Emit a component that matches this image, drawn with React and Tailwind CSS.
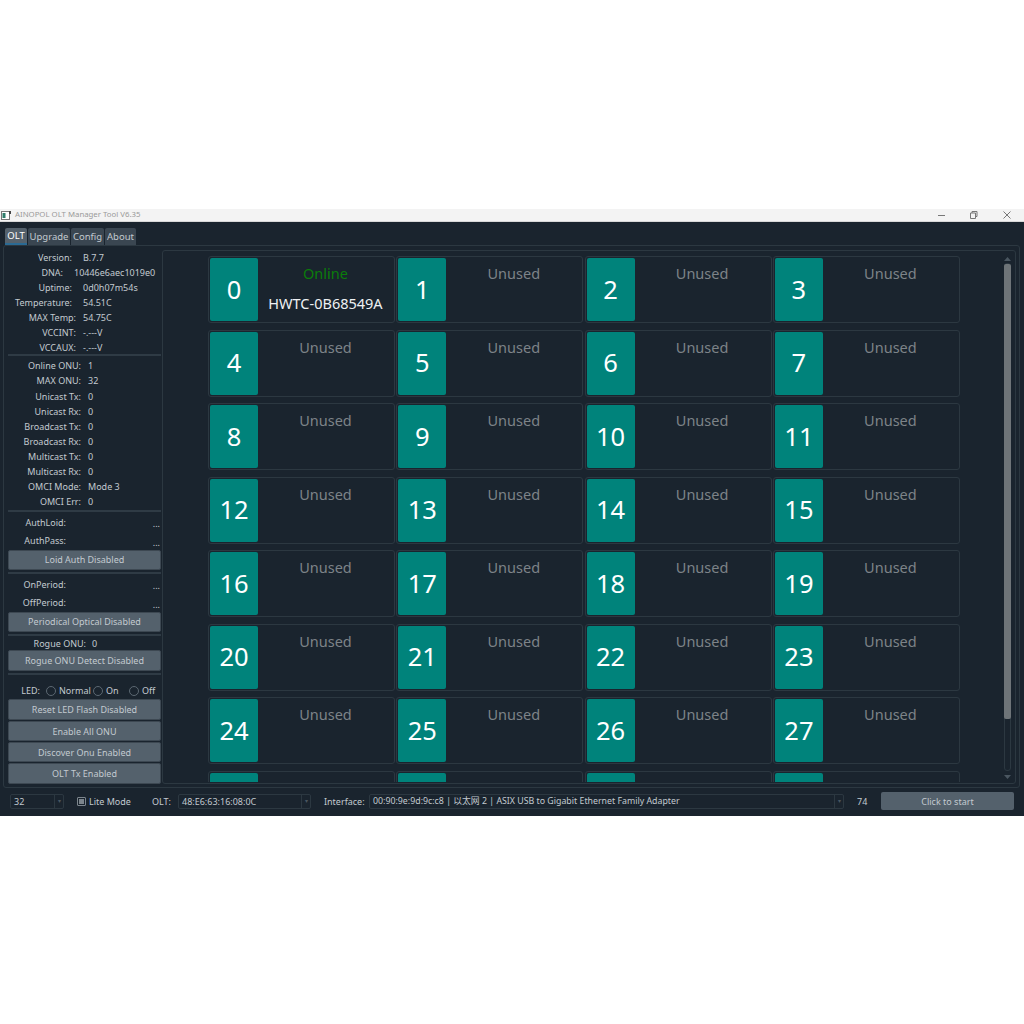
const sans = "font-['Noto_Sans','Noto_Sans_CJK_SC',sans-serif]";

function InfoRow({ label, value, lw, gap, h }) {
  return (
    <div className={`flex ${h} items-center whitespace-nowrap text-[9px] leading-none text-[#c3cad0]`}>
      <span className={`${lw} shrink-0 text-right`}>{label}</span>
      <span className={gap}>{value}</span>
    </div>
  );
}

function Sep({ className = "" }) {
  return <div className={`h-[2px] w-[153px] bg-[#2f3b45] ${className}`} />;
}

function Btn({ children, className = "" }) {
  return (
    <div className={`flex w-[153px] items-center justify-center rounded-[2px] border border-[#3d4852] bg-[#54616c] text-[9px] leading-none text-[#c3cad0] ${className}`}>
      {children}
    </div>
  );
}

function Field({ label }) {
  return (
    <div className="flex h-[19px] w-[153px] items-center justify-between pt-[1px] text-[9px] leading-none text-[#c3cad0]">
      <span className="w-[58px] text-right">{label}</span>
      <span className="pr-[1px] pt-[3px] leading-none">...</span>
    </div>
  );
}

function Radio({ label, w }) {
  return (
    <span className={`flex items-center ${w}`}>
      <span className="mr-[3px] h-[10px] w-[10px] shrink-0 rounded-full border border-[#5c6872]" />
      {label}
    </span>
  );
}

function Card({ n, online }) {
  return (
    <div className="flex h-[67px] w-[187px] shrink-0 rounded-[3px] border border-[#2c3841] p-[1px]">
      <div className="flex h-[63px] w-[48px] shrink-0 items-center justify-center rounded-[2px] bg-[#00837b] text-[25.5px] leading-none text-white">
        {n}
      </div>
      <div className="flex flex-1 flex-col items-center pt-[5px]">
        <div className={`text-[14.5px] leading-[20px] ${online ? "text-[#0a7d0a]" : "text-[#7d8388]"}`}>
          {online ? "Online" : "Unused"}
        </div>
        {online && <div className="mt-[10px] whitespace-nowrap text-[14.5px] leading-[20px] text-[#eef1f3]">HWTC-0B68549A</div>}
      </div>
    </div>
  );
}

const first = [
  ["Version:", "B.7.7", "w-[64px]", "ml-[11px]"],
  ["DNA:", "10446e6aec1019e0", "w-[55px]", "ml-[11px]"],
  ["Uptime:", "0d0h07m54s", "w-[64px]", "ml-[11px]"],
  ["Temperature:", "54.51C", "w-[64px]", "ml-[11px]"],
  ["MAX Temp:", "54.75C", "w-[68px]", "ml-[7px]"],
  ["VCCINT:", "-.---V", "w-[68px]", "ml-[7px]"],
  ["VCCAUX:", "-.---V", "w-[68px]", "ml-[7px]"],
];
const second = [
  ["Online ONU:", "1"],
  ["MAX ONU:", "32"],
  ["Unicast Tx:", "0"],
  ["Unicast Rx:", "0"],
  ["Broadcast Tx:", "0"],
  ["Broadcast Rx:", "0"],
  ["Multicast Tx:", "0"],
  ["Multicast Rx:", "0"],
  ["OMCI Mode:", "Mode 3"],
  ["OMCI Err:", "0"],
];

export default function App() {
  const rows = [];
  for (let r = 0; r < 8; r++) rows.push([0, 1, 2, 3].map((c) => r * 4 + c));
  return (
    <div className={`flex min-h-[1024px] flex-col bg-white pt-[209px] ${sans}`}>
      <div className="flex h-[13px] items-center border-b border-[#d8d8d8] bg-[#f3f3f3] pl-[1px] text-[7.8px] leading-none text-[#9a9a9a]">
        <svg width="10" height="9" viewBox="0 0 10 9" className="mr-[4px]">
          <rect x="0.5" y="0.5" width="8" height="8" fill="#fff" stroke="#777" />
          <rect x="1.5" y="2" width="3" height="5" fill="#2f7d6b" />
          <rect x="8" y="0" width="2" height="3" fill="#444" />
        </svg>
        AINOPOL OLT Manager Tool V6.35
        <div className="ml-auto flex items-center">
          <svg width="8" height="8" viewBox="0 0 8 8" className="mr-[24px]"><path d="M0 4.5h7" stroke="#777" /></svg>
          <svg width="8" height="8" viewBox="0 0 8 8" className="mr-[25px]"><path d="M0.5 2h5v5.5h-5zM2 2V0.5h5v5h-1.5" stroke="#777" fill="none" /></svg>
          <svg width="8" height="8" viewBox="0 0 8 8" className="mr-[13px]"><path d="M0.5 0.5l7 7M7.5 0.5l-7 7" stroke="#777" /></svg>
        </div>
      </div>

      <div className="flex h-[594px] flex-col bg-[#1a242e]">
        <div className="flex h-[23px] items-end gap-[1px] pl-[5px] text-[9.5px] leading-none text-[#c3cad0]">
          <div className="flex h-[17px] w-[22px] items-center justify-center rounded-t-[2px] border-b-2 border-[#2a6a94] bg-[#54616c] text-white">OLT</div>
          <div className="flex h-[17px] w-[42px] items-center justify-center rounded-t-[2px] bg-[#3a4651]">Upgrade</div>
          <div className="flex h-[17px] w-[33px] items-center justify-center rounded-t-[2px] bg-[#3a4651]">Config</div>
          <div className="flex h-[17px] w-[31px] items-center justify-center rounded-t-[2px] bg-[#3a4651]">About</div>
        </div>

        <div className="ml-[3px] mr-[4px] flex h-[543px] rounded-[3px] border border-[#2c3841] pb-[3px] pl-[4px] pr-[3px] pt-[4px]">
          <div className="flex w-[154px] shrink-0 flex-col">
            {first.map(([l, v, w, g]) => <InfoRow key={l} label={l} value={v} lw={w} gap={g} h="h-[15.33px]" />)}
            <Sep className="mt-[-1px]" />
            <div className="h-[2px]" />
            {second.map(([l, v]) => <InfoRow key={l} label={l} value={v} lw="w-[73px]" gap="ml-[7px]" h="h-[15.4px]" />)}
            <Sep className="mt-[1px]" />
            <Field label="AuthLoid:" />
            <Field label="AuthPass:" />
            <Btn className="h-[21px]">Loid Auth Disabled</Btn>
            <Sep className="mt-[2px]" />
            <Field label="OnPeriod:" />
            <Field label="OffPeriod:" />
            <Btn className="h-[21px]">Periodical Optical Disabled</Btn>
            <Sep className="mt-[2px]" />
            <div className="flex h-[14px] items-center whitespace-nowrap text-[9px] leading-none text-[#c3cad0]">
              <span className="w-[78px] text-right">Rogue ONU:</span>
              <span className="ml-[6px]">0</span>
            </div>
            <Btn className="h-[21px]">Rogue ONU Detect Disabled</Btn>
            <Sep className="mt-[2px]" />
            <div className="flex h-[25px] items-end pb-[2px] whitespace-nowrap text-[9px] leading-[12px] text-[#c3cad0]">
              <span className="w-[32px] shrink-0 text-right">LED:</span>
              <span className="w-[6px]" />
              <Radio label="Normal" w="w-[47px]" />
              <Radio label="On" w="w-[36px]" />
              <Radio label="Off" w="w-[28px]" />
            </div>
            <div className="flex flex-col gap-[1px]">
              <Btn className="h-[21px]">Reset LED Flash Disabled</Btn>
              <Btn className="h-[20px]">Enable All ONU</Btn>
              <Btn className="h-[20px]">Discover Onu Enabled</Btn>
              <Btn className="h-[21px]">OLT Tx Enabled</Btn>
            </div>
          </div>

          <div className="flex h-[534px] flex-1 rounded-[3px] border border-[#2c3841] pl-[45px] pr-[3px] pt-[5px]">
            <div className="flex h-[526px] flex-1 flex-col gap-[6.5px] overflow-hidden">
              {rows.map((row, i) => (
                <div key={i} className="flex gap-[1.3px]">
                  {row.map((n) => <Card key={n} n={n} online={n === 0} />)}
                </div>
              ))}
            </div>
            <div className="relative h-[524px] w-[8px] shrink-0">
              <svg width="7" height="4" viewBox="0 0 7 4" className="absolute left-0 top-[1px]"><path d="M3.5 0L7 4H0z" fill="#4a5660" /></svg>
              <div className="absolute left-0 top-[7px] h-[508px] w-[7px] rounded-[3px] border border-[#2c3841]" />
              <div className="absolute left-0 top-[8px] h-[455px] w-[7px] rounded-[2px] bg-[#6e7478]" />
              <svg width="7" height="4" viewBox="0 0 7 4" className="absolute bottom-[1px] left-0"><path d="M3.5 4L7 0H0z" fill="#4a5660" /></svg>
            </div>
          </div>
        </div>

        <div className="flex h-[28px] items-center whitespace-nowrap pb-[2px] pl-[10px] text-[9px] leading-none text-[#c3cad0]">
          <div className="flex h-[15px] w-[54px] items-center justify-between rounded-[2px] border border-[#2c3841] pl-[3px]">
            32
            <span className="flex h-full w-[9px] items-center justify-center border-l border-[#2c3841] text-[6px] text-[#4a5660]">▾</span>
          </div>
          <span className="ml-[13px] mr-[3px] flex h-[9px] w-[9px] items-center justify-center rounded-[1px] border border-[#7c858c]">
            <span className="h-[5px] w-[5px] bg-[#7c858c]" />
          </span>
          <span className="w-[63px]">Lite Mode</span>
          <span className="w-[26px]">OLT:</span>
          <div className="flex h-[15px] w-[133px] items-center justify-between rounded-[2px] border border-[#2c3841] pl-[3px]">
            48:E6:63:16:08:0C
            <span className="flex h-full w-[9px] items-center justify-center border-l border-[#2c3841] text-[6px] text-[#4a5660]">▾</span>
          </div>
          <span className="ml-[13px] w-[45px]">Interface:</span>
          <div className="flex h-[15px] w-[475px] items-center justify-between rounded-[2px] border border-[#2c3841] pl-[3px]">
            <span className="text-[8.8px]">00:90:9e:9d:9c:c8 | 以太网 2 | ASIX USB to Gigabit Ethernet Family Adapter</span>
            <span className="flex h-full w-[9px] items-center justify-center border-l border-[#2c3841] text-[6px] text-[#4a5660]">▾</span>
          </div>
          <span className="ml-[13px] w-[24px]">74</span>
          <div className="flex h-[18px] w-[133px] items-center justify-center rounded-[2px] bg-[#54616c]">Click to start</div>
        </div>
      </div>
    </div>
  );
}
